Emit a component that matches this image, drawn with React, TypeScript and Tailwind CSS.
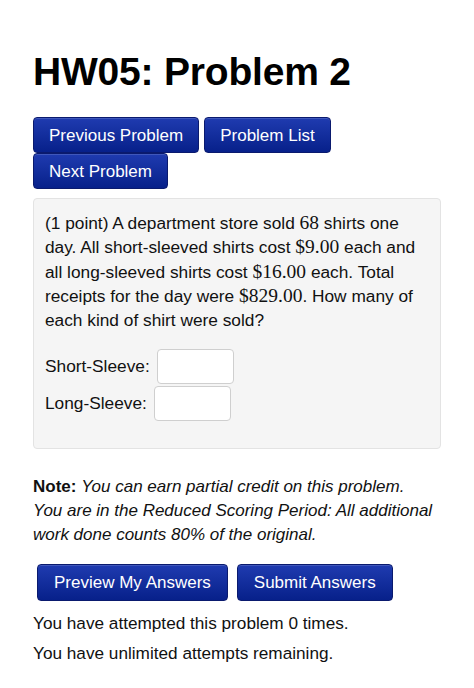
import React from "react";

const btn =
  "rounded-[4px] border border-[#0a1a6e] bg-gradient-to-b from-[#1f3bb0] to-[#07208a] text-white text-[17px] leading-none h-[36px] px-[15px] shadow-[inset_0_1px_0_rgba(255,255,255,0.15)]";

function M({ children }: { children: React.ReactNode }) {
  return <span className="font-['Liberation_Serif',serif] text-[19.5px]">{children}</span>;
}

export default function App() {
  return (
    <div className="min-h-[688px] bg-white font-['Liberation_Sans',Arial,sans-serif] text-[#111] pl-[33px] pr-[33px]">
      <h1 className="pt-[50px] text-[39px] font-bold leading-[44px] tracking-[-0.2px] text-black">
        HW05: Problem 2
      </h1>

      <div className="mt-[23px] flex flex-wrap gap-x-[5px] w-[330px]">
        <button className={btn}>Previous Problem</button>
        <button className={btn}>Problem List</button>
        <button className={btn}>Next Problem</button>
      </div>

      <div className="mt-[9px] h-[251px] rounded-[4px] border border-[#e3e3e3] bg-[#f5f5f5] px-[11px] pt-[12px]">
        <p className="text-[17.3px] leading-[24.3px] whitespace-nowrap">
          (1 point) A department store sold <M>68</M> shirts one
          <br />
          day. All short-sleeved shirts cost <M>$9.00</M> each and
          <br />
          all long-sleeved shirts cost <M>$16.00</M> each. Total
          <br />
          receipts for the day were <M>$829.00</M>. How many of
          <br />
          each kind of shirt were sold?
        </p>
        <div className="mt-[17px] flex items-center gap-[7px] text-[17.3px]">
          <span>Short-Sleeve:</span>
          <div className="h-[35px] w-[77px] rounded-[4px] border border-[#cfcfcf] bg-white" />
        </div>
        <div className="mt-[2px] flex items-center gap-[7px] text-[17.3px]">
          <span>Long-Sleeve:</span>
          <div className="h-[35px] w-[77px] rounded-[4px] border border-[#cfcfcf] bg-white" />
        </div>
      </div>

      <p className="mt-[26px] text-[17px] leading-[24px] whitespace-nowrap">
        <b>Note:</b>{" "}
        <i>
          You can earn partial credit on this problem.
          <br />
          You are in the Reduced Scoring Period: All additional
          <br />
          work done counts 80% of the original.
        </i>
      </p>

      <div className="mt-[17px] ml-[4px] flex gap-[9px]">
        <button className={btn + " h-[37px] !px-[16px]"}>Preview My Answers</button>
        <button className={btn + " h-[37px] !px-[16px]"}>Submit Answers</button>
      </div>

      <div className="mt-[7px] text-[17.2px] leading-[30px]">
        <div>You have attempted this problem 0 times.</div>
        <div>You have unlimited attempts remaining.</div>
      </div>
    </div>
  );
}
